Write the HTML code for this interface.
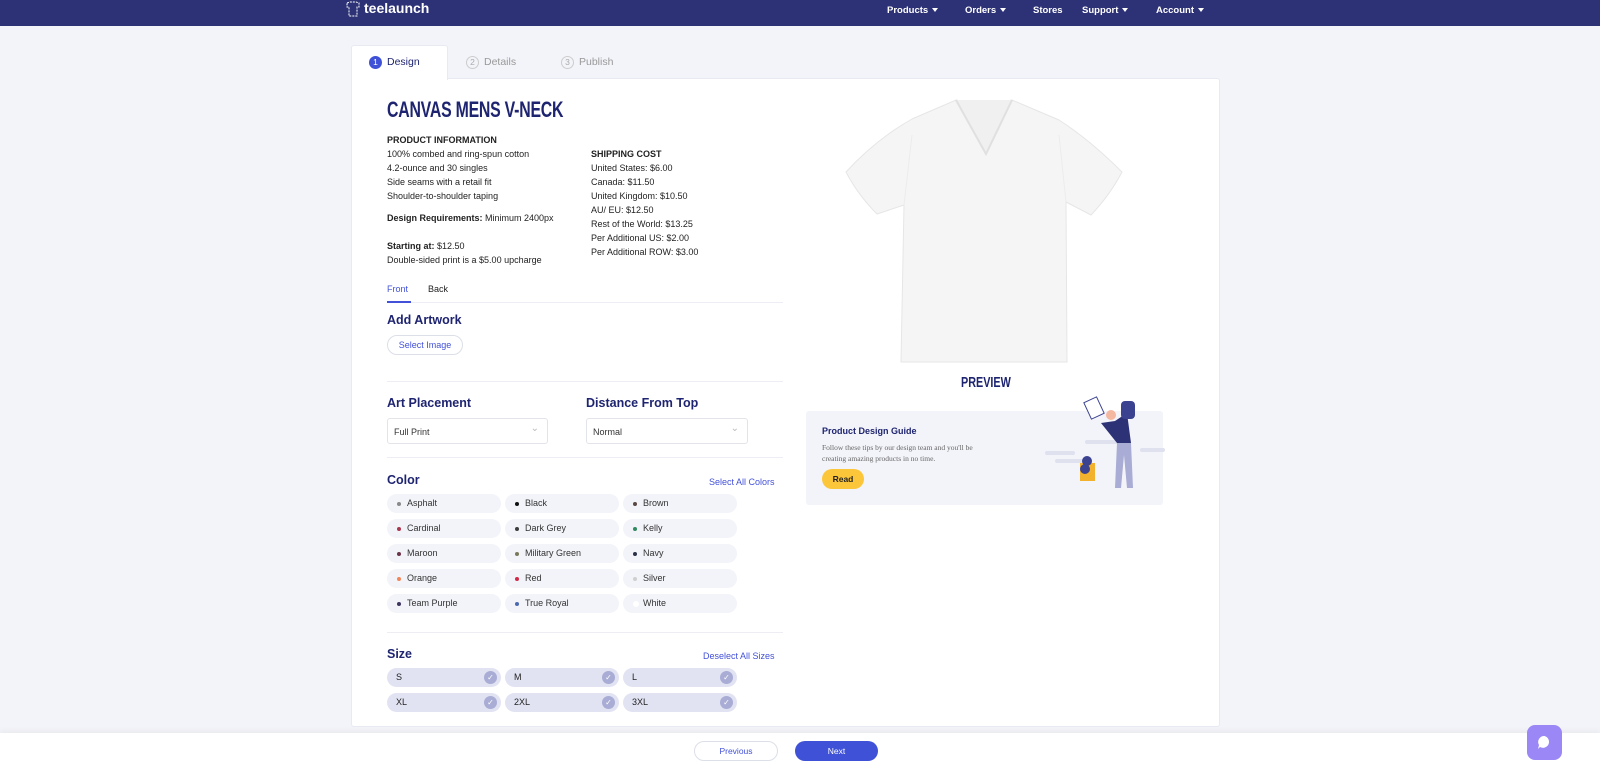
<!DOCTYPE html>
<html><head><meta charset="utf-8"><style>
*{box-sizing:border-box;margin:0;padding:0}
body{width:1600px;height:783px;overflow:hidden;background:#f3f4f9;font-family:"Liberation Sans",sans-serif;color:#222;position:relative}
.abs{position:absolute}
.nav{top:0;left:0;width:1600px;height:26px;background:#2d3276}
.nav .it{color:#fff;font-weight:bold;font-size:9.5px;top:5px}
.tri{display:inline-block;border-left:3.5px solid transparent;border-right:3.5px solid transparent;border-top:4px solid #fff;margin-left:4px;vertical-align:1px}
.card{left:351px;top:78px;width:869px;height:649px;background:#fff;border:1px solid #e8eaf2;border-radius:3px}
.tab{top:45px;height:34px;font-size:10.5px;color:#999;display:flex;align-items:center}
.num{width:13px;height:13px;border-radius:50%;border:1px solid #ccc;font-size:8.5px;display:inline-flex;align-items:center;justify-content:center;margin-right:5px;color:#aaa}
.t{font-size:9px;line-height:14px;color:#222}
.h{font-size:12.5px;font-weight:bold;color:#1e2470}
.hr{height:1px;background:#eceef4;left:387px;width:396px}
.sel{height:26px;border:1px solid #e2e4ea;border-radius:3px;font-size:9px;padding:8px 6px;color:#333}
.sel:after{content:"⌄";position:absolute;right:8px;top:4px;color:#bbb;font-size:10px}
.pill{width:114px;height:19px;border-radius:10px;background:#f3f4f9;font-size:9px;padding:4px 0 0 20px;color:#333}
.pill i{position:absolute;left:10px;top:8px;width:4px;height:4px;border-radius:50%}
.sz{width:114px;height:19px;border-radius:10px;background:#e1e3f3;font-size:9px;padding:4px 0 0 9px;color:#222}
.sz i{position:absolute;right:4px;top:3px;width:13px;height:13px;border-radius:50%;background:#a9acd4;color:#fff;font-size:8px;text-align:center;line-height:13px;font-style:normal}
.link{font-size:9px;color:#4351d8}
</style></head><body>
<div class="abs nav">
 <svg class="abs" style="left:346px;top:1px" width="14" height="16" viewBox="0 0 14 16"><path d="M1 2 L4 1 L10 1 L13 2 L13 6 L11 6 L11 15 L3 15 L3 6 L1 6 Z" fill="none" stroke="#fff" stroke-width="1" stroke-dasharray="2 1"/></svg>
 <div class="abs" style="left:364px;top:0px;color:#fff;font-weight:bold;font-size:14px">teelaunch</div>
 <div class="abs it" style="left:887px">Products<span class="tri"></span></div>
 <div class="abs it" style="left:965px">Orders<span class="tri"></span></div>
 <div class="abs it" style="left:1033px">Stores</div>
 <div class="abs it" style="left:1082px">Support<span class="tri"></span></div>
 <div class="abs it" style="left:1156px">Account<span class="tri"></span></div>
</div>
<div class="abs card"></div>
<div class="abs" style="left:351px;top:45px;width:97px;height:35px;background:#fff;border:1px solid #e8eaf2;border-bottom:none;border-radius:3px 3px 0 0"></div>
<div class="abs tab" style="left:369px;color:#1e2470"><span class="num" style="background:#3f51d6;border-color:#3f51d6;color:#fff">1</span>Design</div>
<div class="abs tab" style="left:466px"><span class="num">2</span>Details</div>
<div class="abs tab" style="left:561px"><span class="num">3</span>Publish</div>

<div class="abs" style="left:387px;top:97px;font-size:22px;font-weight:bold;color:#1e2470;transform:scaleX(.72);transform-origin:left;letter-spacing:-.3px;white-space:nowrap">CANVAS MENS V-NECK</div>
<div class="abs t" style="left:387px;top:133px"><b>PRODUCT INFORMATION</b><br>100% combed and ring-spun cotton<br>4.2-ounce and 30 singles<br>Side seams with a retail fit<br>Shoulder-to-shoulder taping</div>
<div class="abs t" style="left:387px;top:211px"><b>Design Requirements:</b> Minimum 2400px</div>
<div class="abs t" style="left:387px;top:239px"><b>Starting at:</b> $12.50<br>Double-sided print is a $5.00 upcharge</div>
<div class="abs t" style="left:591px;top:147px"><b>SHIPPING COST</b><br>United States: $6.00<br>Canada: $11.50<br>United Kingdom: $10.50<br>AU/ EU: $12.50<br>Rest of the World: $13.25<br>Per Additional US: $2.00<br>Per Additional ROW: $3.00</div>

<div class="abs" style="left:387px;top:284px;font-size:9px;color:#4351d8">Front</div>
<div class="abs" style="left:428px;top:284px;font-size:9px;color:#222">Back</div>
<div class="abs hr" style="top:302px"></div>
<div class="abs" style="left:387px;top:301px;width:24px;height:2px;background:#4351d8"></div>
<div class="abs h" style="left:387px;top:313px">Add Artwork</div>
<div class="abs" style="left:387px;top:335px;width:76px;height:20px;border:1px solid #dcdfe8;border-radius:10px;font-size:9px;color:#4351d8;text-align:center;line-height:18px">Select Image</div>
<div class="abs hr" style="top:381px"></div>
<div class="abs h" style="left:387px;top:396px">Art Placement</div>
<div class="abs h" style="left:586px;top:396px">Distance From Top</div>
<div class="abs sel" style="left:387px;top:418px;width:161px">Full Print</div>
<div class="abs sel" style="left:586px;top:418px;width:162px">Normal</div>
<div class="abs hr" style="top:457px"></div>
<div class="abs h" style="left:387px;top:473px">Color</div>
<div class="abs link" style="left:709px;top:477px">Select All Colors</div>

<div class="abs pill" style="left:387px;top:494px"><i style="background:#8a8a8a"></i>Asphalt</div>
<div class="abs pill" style="left:505px;top:494px"><i style="background:#111"></i>Black</div>
<div class="abs pill" style="left:623px;top:494px"><i style="background:#5a4845"></i>Brown</div>
<div class="abs pill" style="left:387px;top:519px"><i style="background:#a8384e"></i>Cardinal</div>
<div class="abs pill" style="left:505px;top:519px"><i style="background:#3d3d3d"></i>Dark Grey</div>
<div class="abs pill" style="left:623px;top:519px"><i style="background:#2f8a5e"></i>Kelly</div>
<div class="abs pill" style="left:387px;top:544px"><i style="background:#6b3448"></i>Maroon</div>
<div class="abs pill" style="left:505px;top:544px"><i style="background:#7a7a5a"></i>Military Green</div>
<div class="abs pill" style="left:623px;top:544px"><i style="background:#2c3245"></i>Navy</div>
<div class="abs pill" style="left:387px;top:569px"><i style="background:#f0865a"></i>Orange</div>
<div class="abs pill" style="left:505px;top:569px"><i style="background:#d02a48"></i>Red</div>
<div class="abs pill" style="left:623px;top:569px"><i style="background:#cfcfcf"></i>Silver</div>
<div class="abs pill" style="left:387px;top:594px"><i style="background:#3e3560"></i>Team Purple</div>
<div class="abs pill" style="left:505px;top:594px"><i style="background:#4a6ab0"></i>True Royal</div>
<div class="abs pill" style="left:623px;top:594px"><i style="background:#fff;width:6px;height:6px;top:7px"></i>White</div>
<div class="abs hr" style="top:632px"></div>
<div class="abs h" style="left:387px;top:647px">Size</div>
<div class="abs link" style="left:703px;top:651px">Deselect All Sizes</div>
<div class="abs sz" style="left:387px;top:668px">S<i>✓</i></div>
<div class="abs sz" style="left:505px;top:668px">M<i>✓</i></div>
<div class="abs sz" style="left:623px;top:668px">L<i>✓</i></div>
<div class="abs sz" style="left:387px;top:693px">XL<i>✓</i></div>
<div class="abs sz" style="left:505px;top:693px">2XL<i>✓</i></div>
<div class="abs sz" style="left:623px;top:693px">3XL<i>✓</i></div>

<svg class="abs" style="left:840px;top:95px" width="290" height="275" viewBox="0 0 290 275">
<path d="M116 5 Q146 12 172 5 L219 25 Q250 45 282 77 Q270 100 251 120 L226 107 L227 267 L61 267 L64 110 L37 119 Q18 100 6 77 Q35 45 72 24 Z" fill="#f5f5f5" stroke="#e6e6e6"/>
<path d="M116 5 L146 59 L172 5" fill="#f0f0f0" stroke="#e0e0e0" stroke-width="2"/>
<path d="M64 110 L72 40 M226 107 L219 40" stroke="#ececec" fill="none"/>
</svg>
<div class="abs" style="left:961px;top:374px;font-size:15px;font-weight:bold;color:#1e2470;transform:scaleX(.72);transform-origin:left">PREVIEW</div>

<div class="abs" style="left:806px;top:411px;width:357px;height:94px;background:#f3f4f9;border-radius:3px"></div>
<div class="abs" style="left:822px;top:426px;font-size:9px;font-weight:bold;color:#1e2470">Product Design Guide</div>
<div class="abs" style="left:822px;top:442px;font-family:'Liberation Serif',serif;font-size:7.5px;line-height:11px;color:#666">Follow these tips by our design team and you'll be<br>creating amazing products in no time.</div>
<div class="abs" style="left:822px;top:469px;width:42px;height:20px;background:#fcc63a;border-radius:10px;font-size:8.5px;font-weight:bold;text-align:center;line-height:20px">Read</div>
<svg class="abs" style="left:1045px;top:393px" width="120" height="102" viewBox="0 0 120 102">
<rect x="0" y="58" width="30" height="4" rx="2" fill="#dfe1ef"/><rect x="10" y="66" width="30" height="4" rx="2" fill="#dfe1ef"/><rect x="40" y="47" width="40" height="4" rx="2" fill="#dfe1ef"/><rect x="95" y="55" width="25" height="4" rx="2" fill="#dfe1ef"/>
<rect x="35" y="70" width="15" height="18" fill="#f2b22e"/><circle cx="42" cy="68" r="5" fill="#3b4290"/><circle cx="40" cy="76" r="5" fill="#3b4290"/>
<rect x="42" y="6" width="14" height="18" fill="#fff" stroke="#3b4290" transform="rotate(-25 49 15)"/>
<path d="M56 30 L70 28 L82 20 L86 50 L72 50 Z" fill="#2d3276"/><circle cx="66" cy="22" r="5" fill="#f4b7a0"/>
<path d="M72 50 L86 50 L88 95 L82 95 L79 62 L76 95 L70 95 Z" fill="#a9acd4"/>
<rect x="76" y="8" width="14" height="18" rx="4" fill="#3b4290"/>
</svg>

<div class="abs" style="left:0;top:733px;width:1600px;height:50px;background:#fff;box-shadow:0 -2px 6px rgba(0,0,0,.05)"></div>
<div class="abs" style="left:694px;top:741px;width:84px;height:20px;border:1px solid #dcdfe8;border-radius:10px;font-size:8.5px;color:#4351d8;text-align:center;line-height:18px">Previous</div>
<div class="abs" style="left:795px;top:741px;width:83px;height:20px;background:#3f51d6;border-radius:10px;font-size:8.5px;color:#fff;text-align:center;line-height:20px">Next</div>
<div class="abs" style="left:1527px;top:725px;width:35px;height:35px;background:#9b87f5;border-radius:8px"></div>
<svg class="abs" style="left:1537px;top:735px" width="15" height="15" viewBox="0 0 15 15"><path d="M7.5 1 A6 6 0 1 1 3 12 L1 14 L2 10 A6 6 0 0 1 7.5 1 Z" fill="#fff"/></svg>
</body></html>
